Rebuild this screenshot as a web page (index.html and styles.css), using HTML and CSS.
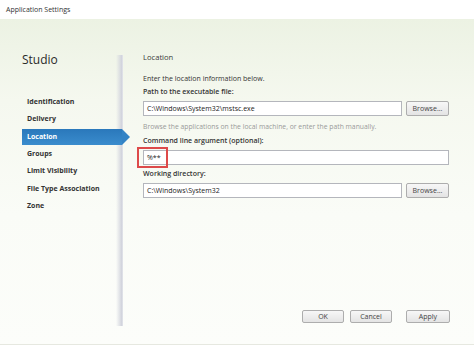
FILE: index.html
```html
<!DOCTYPE html>
<html>
	<head>
		<meta charset="UTF-8">
		<title>Application Settings</title>
		<link rel="stylesheet" href="styles.css">
	</head>
	<body>
		<div class="window">
			<div class="titleBar">Application Settings</div>
			<div class="main">
				<div class="sidebar">
					<h1>Studio</h1>
					<ul class="nav">
						<li>Identification</li>
						<li>Delivery</li>
						<li class="active">Location</li>
						<li>Groups</li>
						<li>Limit Visibility</li>
						<li>File Type Association</li>
						<li>Zone</li>
					</ul>
				</div>
				<div class="divider"></div>
				<div class="content">
					<h2>Location</h2>
					<p class="intro">Enter the location information below.</p>
					<label>Path to the executable file:</label>
					<div class="fieldRow">
						<div class="field">C:\Windows\System32\mstsc.exe</div>
						<button class="btn">Browse...</button>
					</div>
					<p class="hint">Browse the applications on the local machine, or enter the path manually.</p>
					<label class="gapLabel">Command line argument (optional):</label>
					<div class="fieldRow">
						<div class="field marked">%**<span class="mark"></span></div>
					</div>
					<label class="gapLabel2">Working directory:</label>
					<div class="fieldRow">
						<div class="field">C:\Windows\System32</div>
						<button class="btn">Browse...</button>
					</div>
					<div class="actions">
						<button class="btn">OK</button>
						<button class="btn">Cancel</button>
						<button class="btn apply">Apply</button>
					</div>
				</div>
			</div>
		</div>
	</body>
</html>
```

FILE: styles.css
```css
*,
*::before,
*::after{
	box-sizing: border-box;
}
html,body{
	margin: 0;
	padding: 0;
}
body{
	width: 474px;
	height: 345px;
	overflow: hidden;
	font-family: "Open Sans", "Liberation Sans", sans-serif;
	font-size: 7px;
	color: #222;
}
.window{
	height: 345px;
	display: flex;
	flex-direction: column;
}
.titleBar{
	height: 19px;
	line-height: 20px;
	padding-left: 6px;
	font-size: 7px;
	color: #333;
	background: #fff;
}
.main{
	flex: 1;
	display: flex;
	background: linear-gradient(#ecf2e3, #f5f8ef 25%, #fafcf7 60%, #fcfdfa);
	border-bottom: 1px solid #e6e8e0;
}
.sidebar{
	width: 116px;
	padding-top: 33px;
}
.sidebar h1{
	margin: 0 0 0 22px;
	font-size: 12px;
	line-height: 16px;
	font-weight: normal;
	color: #2a2a2a;
}
.sidebar .nav{
	list-style: none;
	margin: 26px -6px 0 22px;
	padding: 0;
	display: flex;
	flex-direction: column;
	gap: 1.35px;
}
.sidebar .nav li{
	height: 16px;
	line-height: 16px;
	padding-left: 5px;
	font-weight: bold;
	font-size: 7px;
	color: #333;
	position: relative;
}
.sidebar .nav li.active{
	color: #fff;
	background: linear-gradient(#2a78bb, #3a8ccd);
	z-index: 1;
}
.sidebar .nav li.active::after{
	content: "";
	position: absolute;
	right: -8px;
	top: 0;
	border-left: 8px solid #3383c5;
	border-top: 8px solid transparent;
	border-bottom: 8px solid transparent;
}
.divider{
	width: 7px;
	margin: 36px 0 18px;
	background: linear-gradient(to right, rgba(215,217,226,0), #d2d4dd 80%, #e4e6ec);
}
.content{
	flex: 1;
	display: flex;
	flex-direction: column;
	padding: 32px 25px 21px 20px;
}
.content h2{
	margin: 0;
	font-size: 7.6px;
	line-height: 12px;
	font-weight: normal;
	color: #3a3a3a;
}
.content p{
	margin: 0;
	line-height: 12px;
}
.content .intro{
	margin-top: 10px;
	color: #333;
}
.content label{
	display: block;
	margin-top: 1px;
	line-height: 12px;
	font-weight: 600;
	color: #333;
}
.content .gapLabel{
	margin-top: 2px;
}
.content .gapLabel2{
	margin-top: 3px;
}
.content .hint{
	margin-top: 5px;
	font-size: 6.8px;
	color: #999;
}
.fieldRow{
	display: flex;
	gap: 4px;
	margin-top: 3px;
}
.field{
	flex: 1;
	height: 15px;
	line-height: 13px;
	padding-left: 3px;
	border: 1px solid #b4b6bc;
	background: #fff;
	color: #222;
	position: relative;
}
.field.marked .mark{
	position: absolute;
	left: -7px;
	top: -4px;
	width: 31px;
	height: 21px;
	border: 2px solid #dd4a4a;
}
.btn{
	font-family: inherit;
	font-size: 7px;
	color: #444;
	height: 15px;
	width: 43px;
	padding: 0;
	border: 1px solid #adadad;
	border-radius: 2px;
	background: linear-gradient(#f7f7f7, #e4e4e4);
}
.actions{
	margin-top: auto;
	display: flex;
	justify-content: flex-end;
	gap: 6px;
}
.actions .btn{
	width: 42px;
	height: 13px;
	line-height: 11px;
}
.actions .apply{
	width: 44px;
	margin-left: 8px;
	margin-right: -1px;
}
```
